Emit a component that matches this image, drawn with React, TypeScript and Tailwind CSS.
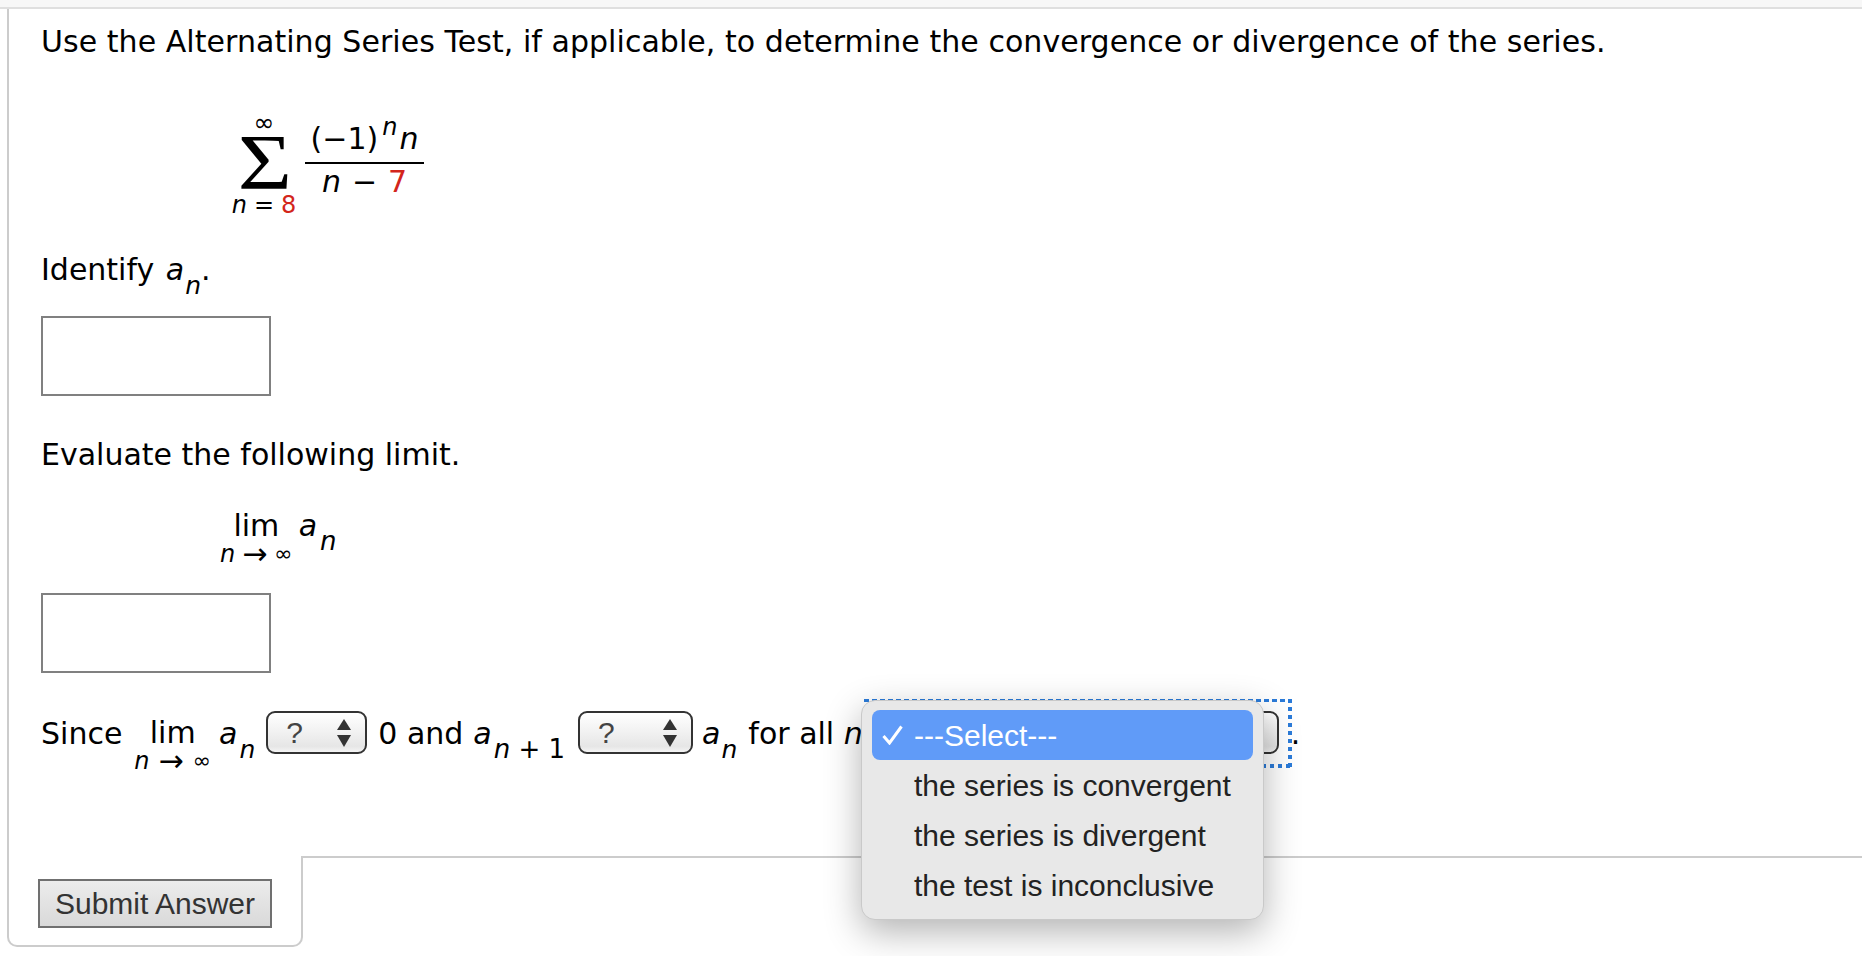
import React from 'react';

const I: React.FC<{ children: React.ReactNode; className?: string }> = ({ children, className = '' }) => (
  <span className={`italic ${className}`}>{children}</span>
);

// n subscript dropped below the baseline
const Sub: React.FC<{ children: React.ReactNode; className?: string }> = ({ children, className = '' }) => (
  <span className={`inline-block translate-y-[14px] whitespace-pre ${className}`}>{children}</span>
);

const Arrows = () => (
  <svg width="16" height="28" viewBox="0 0 16 28" className="shrink-0">
    <path d="M8 0 L15 11 L1 11 Z" fill="#333" />
    <path d="M8 28 L15 16 L1 16 Z" fill="#333" />
  </svg>
);

const SelectBox: React.FC<{ className: string; label?: string }> = ({ className, label = '?' }) => (
  <div
    className={`flex h-[43px] items-center justify-between rounded-[9px] border-2 border-[#333] bg-[linear-gradient(#ffffff,#f1f1f1_50%,#e6e6e6_85%,#f4f4f4)] pl-[18px] pr-[13px] font-['Liberation_Sans',sans-serif] text-[30px] text-[#444] ${className}`}
  >
    <span>{label}</span>
    <Arrows />
  </div>
);

const TextBox = () => <div className="h-[80px] w-[230px] border-2 border-[#808080] bg-white" />;

const LimitUnder: React.FC<{ spaced?: boolean }> = ({ spaced }) => (
  <div className="flex flex-col items-center leading-none">
    <span className="text-[30px] leading-[34px]">lim</span>
    <span className={`flex h-[22px] items-center text-[24px] leading-[22px] ${spaced ? 'gap-[9px]' : 'gap-[7px]'}`}>
      <I>n</I>
      <span className="text-[30px]">→</span>
      <span className="text-[22px]">∞</span>
    </span>
  </div>
);

export default function App() {
  return (
    <div className="h-[956px] w-[1862px] overflow-hidden bg-white font-['DejaVu_Sans',sans-serif] text-[30px] text-black">
      <div className="h-[7px] bg-[#f7f7f7]" />
      <div className="h-[2px] bg-[#dfdfdf]" />

      {/* Question */}
      <div className="relative ml-[7px] h-[847px] border-l-2 border-[#cccccc] pl-[32px]">
        <p className="pt-[13px] leading-[40px] tracking-[0.05px]">
          Use the Alternating Series Test, if applicable, to determine the convergence or divergence of the series.
        </p>

        {/* Series */}
        <div className="ml-[190px] mt-[52px] flex h-[110px] items-start">
          <div className="flex w-[66px] flex-col items-center">
            <span className="h-[20px] text-[25px] leading-[18px]">∞</span>
            <span className="ml-[2px] h-[56px] scale-x-[1.18] font-['Liberation_Serif',serif] text-[79px] leading-[56px]">Σ</span>
            <span className="mt-[1px] flex h-[28px] gap-[7px] text-[24px] leading-[28px]">
              <I>n</I>
              <span>=</span>
              <span className="text-[#d3251b]">8</span>
            </span>
          </div>
          <div className="ml-[8px] flex w-[119px] flex-col items-center pt-[4px]">
            <div className="h-[44px] whitespace-nowrap leading-[40px]">
              (−1)<sup className="relative top-[-3px] ml-[4px] align-[11px] text-[24px] italic leading-none">n</sup><I className="ml-[2px]">n</I>
            </div>
            <div className="h-[2px] w-full bg-black" />
            <div className="flex gap-[11px] leading-[36px]">
              <I>n</I>
              <span>−</span>
              <span className="text-[#d3251b]">7</span>
            </div>
          </div>
        </div>

        <p className="mt-[26px] leading-[40px]">
          Identify <I className="ml-[2px]">a</I>
          <Sub className="ml-[1px] text-[25px]"><I>n</I></Sub>.
        </p>
        <div className="mt-[24px]">
          <TextBox />
        </div>

        <p className="mt-[39px] leading-[40px]">Evaluate the following limit.</p>
        <div className="ml-[179px] mt-[34px] flex h-[62px] items-start">
          <LimitUnder />
          <p className="ml-[6px] leading-[34px]">
            <I>a</I>
            <Sub className="ml-[3px] text-[26px]"><I>n</I></Sub>
          </p>
        </div>
        <div className="mt-[22px]">
          <TextBox />
        </div>

        {/* Since row */}
        <div className="mt-[41px] flex h-[60px] items-start">
          <span className="leading-[40px]">Since</span>
          <div className="ml-[12px] mt-[2px]">
            <LimitUnder spaced />
          </div>
          <p className="ml-[8px] leading-[40px]">
            <I>a</I>
            <Sub className="ml-[2px] text-[25px]"><I>n</I></Sub>
          </p>
          <SelectBox className="-mt-[3px] ml-[11px] w-[101px]" />
          <span className="ml-[11px] leading-[40px]">0 and</span>
          <p className="ml-[10px] leading-[40px]">
            <I>a</I>
            <Sub className="ml-[2px] text-[26px]"><I>n</I> + 1</Sub>
          </p>
          <SelectBox className="-mt-[3px] ml-[13px] w-[115px]" />
          <p className="ml-[9px] leading-[40px]">
            <I>a</I>
            <Sub className="ml-[1px] text-[25px]"><I>n</I></Sub>
          </p>
          <span className="ml-[11px] whitespace-pre leading-[40px]">for all <I>n</I></span>
          <SelectBox className="-mt-[3px] ml-[36px] w-[380px]" label="" />
          <span className="ml-[12px] leading-[40px]">.</span>
        </div>

        {/* Focus ring of the third select */}
        <div className="absolute left-[855px] top-[690px] h-[3px] w-[428px] bg-[repeating-linear-gradient(90deg,#2b7bd9_0_5px,transparent_5px_8px)]" />
        <div className="absolute left-[1279px] top-[690px] h-[69px] w-[4px] bg-[repeating-linear-gradient(180deg,#2b7bd9_0_4px,transparent_4px_8px)]" />
        <div className="absolute left-[1245px] top-[755px] h-[4px] w-[38px] bg-[repeating-linear-gradient(90deg,#2b7bd9_0_4px,transparent_4px_8px)]" />

        {/* Open dropdown */}
        <div className="absolute left-[852px] top-[691px] z-10 h-[220px] w-[403px] rounded-[14px] border border-[#c9c9c9] bg-[#e8e8e8] px-[10px] pt-[9px] font-['Liberation_Sans',sans-serif] text-[30px] text-[#222] shadow-[0_12px_36px_rgba(0,0,0,0.3)]">
          <div className="flex h-[50px] items-center rounded-[8px] bg-[#609bf8] text-white">
            <svg width="21" height="20" viewBox="0 0 21 20" className="ml-[10px] mr-[11px] shrink-0">
              <path d="M1.5 11 L7.5 18 L19.5 1.5" fill="none" stroke="#fff" strokeWidth="3" />
            </svg>
            <span>---Select---</span>
          </div>
          <div className="flex h-[50px] items-center pl-[42px]">the series is convergent</div>
          <div className="flex h-[50px] items-center pl-[42px]">the series is divergent</div>
          <div className="flex h-[50px] items-center pl-[42px]">the test is inconclusive</div>
        </div>
      </div>

      {/* Bottom tab */}
      <div className="flex h-[91px] items-start">
        <div className="ml-[7px] h-[91px] w-[296px] rounded-b-[10px] border-x-2 border-b-2 border-[#cccccc] pl-[29px] pt-[23px]">
          <button className="h-[49px] w-[234px] border-2 border-[#707070] bg-[linear-gradient(#ececec,#d9d9d9)] font-['Liberation_Sans',sans-serif] text-[30px] text-[#333]">
            Submit Answer
          </button>
        </div>
        <div className="h-[2px] flex-1 bg-[#cccccc]" />
      </div>
    </div>
  );
}
